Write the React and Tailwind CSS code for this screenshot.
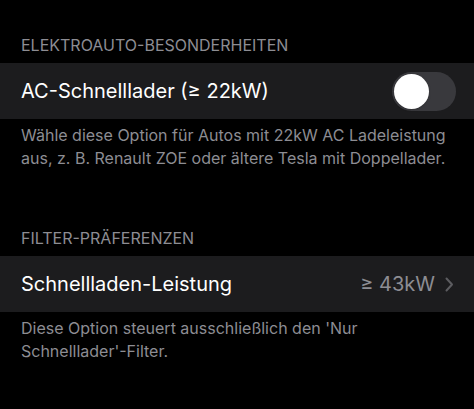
import React, { useState } from 'react';

const font = { fontFamily: 'Inter, "Noto Sans", sans-serif' };

const SectionHeader = ({ children }) => (
    <div className="px-[21px] pb-[8px] text-[16px] leading-[20px] text-[#8d8d93] uppercase">{children}</div>
);

const Footnote = ({ children }) => (
    <div className="pl-[21px] pr-[20px] pt-[5px] text-[16px] leading-[23px] text-[#8d8d93]">{children}</div>
);

const Toggle = ({ on, onChange }) => (
    <button
        onClick={() => onChange(!on)}
        className={`relative w-[64px] h-[39px] rounded-full ${on ? 'bg-[#34c759]' : 'bg-[#39393d]'}`}
    >
        <span
            className={`absolute top-[2px] h-[35px] w-[35px] rounded-full bg-white shadow ${on ? 'left-[27px]' : 'left-[2px]'}`}
        />
    </button>
);

export default function App() {
    const [fastAc, setFastAc] = useState(false);

    return (
        <div className="min-h-screen w-[474px] bg-black pt-[35px] antialiased" style={font}>
            {/* Elektroauto */}
            <SectionHeader>Elektroauto-Besonderheiten</SectionHeader>
            <div className="h-[56px] bg-[#1c1c1e] flex items-center justify-between pl-[21px] pr-[18px]">
                <span className="text-white text-[20px]">AC-Schnelllader (≥ 22kW)</span>
                <Toggle on={fastAc} onChange={setFastAc} />
            </div>
            <Footnote>
                Wähle diese Option für Autos mit 22kW AC Ladeleistung aus, z. B. Renault ZOE oder ältere Tesla mit Doppellader.
            </Footnote>

            {/* Filter */}
            <div className="mt-[58px]">
                <SectionHeader>Filter-Präferenzen</SectionHeader>
                <div className="h-[56px] bg-[#1c1c1e] flex items-center justify-between pl-[21px] pr-[20px]">
                    <span className="text-white text-[20px]">Schnellladen-Leistung</span>
                    <div className="flex items-center gap-[10px]">
                        <span className="text-[#8d8d93] text-[20px]">≥ 43kW</span>
                        <svg width="9" height="15" viewBox="0 0 9 15" fill="none">
                            <path d="M1.5 1.5 L7 7.5 L1.5 13.5" stroke="#5c5c60" strokeWidth="2" strokeLinecap="round" strokeLinejoin="round" />
                        </svg>
                    </div>
                </div>
                <Footnote>
                    Diese Option steuert ausschließlich den 'Nur Schnelllader'-Filter.
                </Footnote>
            </div>
        </div>
    );
}
